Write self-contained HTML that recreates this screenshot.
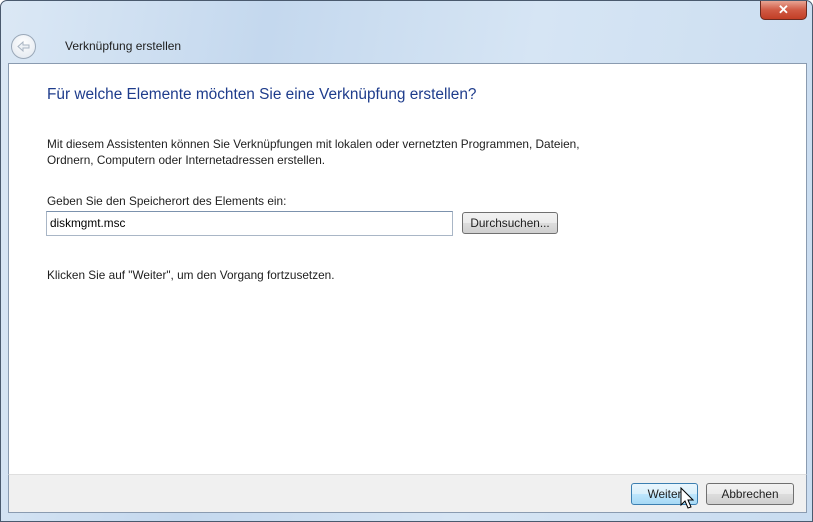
<!DOCTYPE html>
<html><head><style>
body{margin:0;width:813px;height:522px;overflow:hidden;background:#fff;font-family:"Liberation Sans",sans-serif;}
.win{position:absolute;left:0;top:0;width:811px;height:520px;border:1px solid #4a5a6e;border-radius:7px 7px 0 0;background:linear-gradient(100deg,#dbe8f5 0%,#c4d8ee 30%,#d6e5f4 60%,#c9dcf0 100%);}
.close{position:absolute;left:759px;top:0;width:45px;height:18px;background:linear-gradient(#e8a493,#d05a44 50%,#c23e26);border:1px solid #6b2a20;border-top:none;border-radius:0 0 5px 5px;color:#fff;font-weight:bold;font-size:13px;text-align:center;line-height:17px;}
.back{position:absolute;left:10px;top:33px;width:23px;height:23px;border-radius:50%;border:1px solid #9aa8b8;background:radial-gradient(circle at 50% 35%,#fff,#dfe6ee);}
.title{position:absolute;left:64px;top:38px;font-size:12px;color:#1e1e1e;}
.content{position:absolute;left:7px;top:62px;width:797px;height:411px;background:#fff;border:1px solid #8a9bb0;border-bottom:none;}
.foot{position:absolute;left:7px;top:473px;width:797px;height:37px;background:#f0f0f0;border:1px solid #8a9bb0;border-top:1px solid #dfdfdf;}
.h{position:absolute;left:47px;top:86px;font-size:15.4px;color:#1e3c8c;}
.t{position:absolute;left:47px;font-size:11.8px;color:#1e1e1e;line-height:16px;}
.inp{position:absolute;left:46px;top:211px;width:405px;height:23px;border:1px solid #a9b6c6;border-top-color:#7c92ad;background:#fff;}
.inp span{position:absolute;left:3px;top:4px;font-size:11.8px;}
.btn{position:absolute;height:20px;border:1px solid #707070;border-radius:3px;background:linear-gradient(#f2f2f2,#ebebeb 50%,#dddddd 51%,#cfcfcf);font-size:11.8px;text-align:center;line-height:20px;color:#1e1e1e;}
.btn.def{border-color:#3c7fb1;background:linear-gradient(#eaf6fd,#d9f0fc 50%,#bee6fd 51%,#a7d9f5);}
</style></head><body>
<div class="win">
<div class="close">✕</div>
<div class="back"><svg width="23" height="23" style="position:absolute;left:0;top:0"><path d="M6 11.5 L11 7 L11 10 L17 10 L17 13 L11 13 L11 16 Z" fill="#eef2f6" stroke="#a8b4c2" stroke-width="1"/></svg></div>
<div class="title">Verknüpfung erstellen</div>
<div class="content"></div>
<div class="foot"></div>
</div>
<div class="h">Für welche Elemente möchten Sie eine Verknüpfung erstellen?</div>
<div class="t" style="top:136px">Mit diesem Assistenten können Sie Verknüpfungen mit lokalen oder vernetzten Programmen, Dateien,<br>Ordnern, Computern oder Internetadressen erstellen.</div>
<div class="t" style="top:193px">Geben Sie den Speicherort des Elements ein:</div>
<div class="inp"><span>diskmgmt.msc</span></div>
<div class="btn" style="left:462px;top:212px;width:94px;">Durchsuchen...</div>
<div class="t" style="top:267px">Klicken Sie auf "Weiter", um den Vorgang fortzusetzen.</div>
<div class="btn def" style="left:631px;top:483px;width:65px;">Weiter</div>
<div class="btn" style="left:706px;top:483px;width:86px;">Abbrechen</div>
<svg style="position:absolute;left:680px;top:487px" width="14" height="24"><path d="M1 1 L1 18 L5 14 L8 21 L11 20 L8 13 L13 13 Z" fill="#fff" stroke="#000" stroke-width="1"/></svg>
</body></html>
